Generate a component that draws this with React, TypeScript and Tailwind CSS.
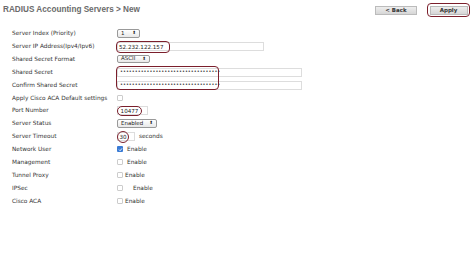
import { ReactNode } from "react"

const red = "border-[1.5px] border-[#7b1f2c]"

function Row({ label, children }: { label: string; children?: ReactNode }) {
  return (
    <div className="flex h-[12.9px] items-center">
      <div className="w-[117px] shrink-0 whitespace-nowrap pl-[12px] text-[5.8px] text-[#333]">{label}</div>
      <div className="flex items-center">{children}</div>
    </div>
  )
}

function Select({ value, w }: { value: string; w: string }) {
  return (
    <div
      className={`flex h-[8.5px] items-center justify-between rounded-[2px] border border-[#999] bg-gradient-to-b from-white to-[#e8e8e8] px-[3px] text-[5.5px] leading-none text-[#222] ${w}`}
    >
      <span>{value}</span>
      <span className="text-[4.5px]">⬍</span>
    </div>
  )
}

function Check({ on, gap }: { on?: boolean; gap: string }) {
  return (
    <div className="flex items-center">
      {on ? (
        <div className="flex h-[6px] w-[6px] items-center justify-center rounded-[1px] bg-[#3a7bd5]">
          <svg viewBox="0 0 10 10" className="h-[5px] w-[5px]">
            <path d="M2 5.2 L4.2 7.4 L8 2.8" stroke="white" strokeWidth="1.8" fill="none" />
          </svg>
        </div>
      ) : (
        <div className="h-[6px] w-[6px] rounded-[1px] border border-[#ccc] bg-white" />
      )}
      <span className={`text-[5.8px] text-[#333] ${gap}`}>Enable</span>
    </div>
  )
}

export default function App() {
  const dots = "••••••••••••••••••••••••••••••••••"
  return (
    <div
      className="h-[261px] w-[474px] overflow-hidden bg-white"
      style={{ fontFamily: "'DejaVu Sans', Verdana, sans-serif" }}
    >
      <div className="flex h-[22px] items-start justify-between pl-[3px] pr-[4px]">
        <div
          className="pt-[6px] text-[8.2px] font-bold leading-none text-[#6b6b6b]"
          style={{ fontFamily: "'Liberation Sans', Arial, sans-serif" }}
        >
          RADIUS Accounting Servers &gt; New
        </div>
        <div className="flex items-center gap-[10px] pt-[3px]">
          <div className="flex h-[9px] w-[42px] items-center justify-center border border-[#bbb] bg-gradient-to-b from-[#eee] to-[#d6d6d6] text-[5.5px] font-bold text-[#333]">
            &lt; Back
          </div>
          <div className={`rounded-[4px] ${red} p-[1.5px]`}>
            <div className="flex h-[9px] w-[38px] items-center justify-center border border-[#bbb] bg-gradient-to-b from-[#eee] to-[#d6d6d6] text-[5.5px] font-bold text-[#333]">
              Apply
            </div>
          </div>
        </div>
      </div>

      <div className="pt-[5px]">
        <Row label="Server Index (Priority)">
          <Select value="1" w="w-[23px]" />
        </Row>
        <Row label="Server IP Address(Ipv4/Ipv6)">
          <div className="relative h-[9px] w-[147px] border border-[#ddd]">
            <div className={`absolute -left-[2px] -top-[2px] flex h-[12px] w-[54px] items-center rounded-[4px] ${red} pl-[2px] text-[5.6px] text-[#222]`}>
              52.232.122.157
            </div>
          </div>
        </Row>
        <Row label="Shared Secret Format">
          <Select value="ASCII" w="w-[33px]" />
        </Row>
        <div className="relative">
          <Row label="Shared Secret">
            <div className="flex h-[9px] w-[185px] items-center border border-[#ddd] pl-[2px] text-[5px] text-[#222]">
              {dots}
            </div>
          </Row>
          <Row label="Confirm Shared Secret">
            <div className="flex h-[9px] w-[185px] items-center border border-[#ddd] pl-[2px] text-[5px] text-[#222]">
              {dots}
            </div>
          </Row>
          <div className={`absolute left-[116px] top-[0px] h-[24px] w-[103px] rounded-[4px] ${red}`} />
        </div>
        <Row label="Apply Cisco ACA Default settings">
          <div className="h-[6px] w-[6px] rounded-[1px] border border-[#ccc]" />
        </Row>
        <Row label="Port Number">
          <div className="relative h-[9px] w-[31px] border border-[#ddd]">
            <div className={`absolute -left-[1px] -top-[1px] flex h-[10px] w-[25px] items-center justify-center rounded-[5px] ${red} text-[5.6px] text-[#222]`}>
              10477
            </div>
          </div>
        </Row>
        <Row label="Server Status">
          <Select value="Enabled" w="w-[40px]" />
        </Row>
        <Row label="Server Timeout">
          <div className="relative h-[9px] w-[18px] border border-[#ddd]">
            <div className={`absolute -left-[1px] -top-[2px] flex h-[12px] w-[12px] items-center justify-center rounded-full ${red} text-[5.6px] text-[#222]`}>
              30
            </div>
          </div>
          <span className="ml-[4px] text-[5.8px] text-[#333]">seconds</span>
        </Row>
        <Row label="Network User">
          <Check on gap="ml-[4px]" />
        </Row>
        <Row label="Management">
          <Check gap="ml-[4px]" />
        </Row>
        <Row label="Tunnel Proxy">
          <Check gap="ml-[2px]" />
        </Row>
        <Row label="IPSec">
          <Check gap="ml-[10px]" />
        </Row>
        <Row label="Cisco ACA">
          <Check gap="ml-[2px]" />
        </Row>
      </div>
    </div>
  )
}
